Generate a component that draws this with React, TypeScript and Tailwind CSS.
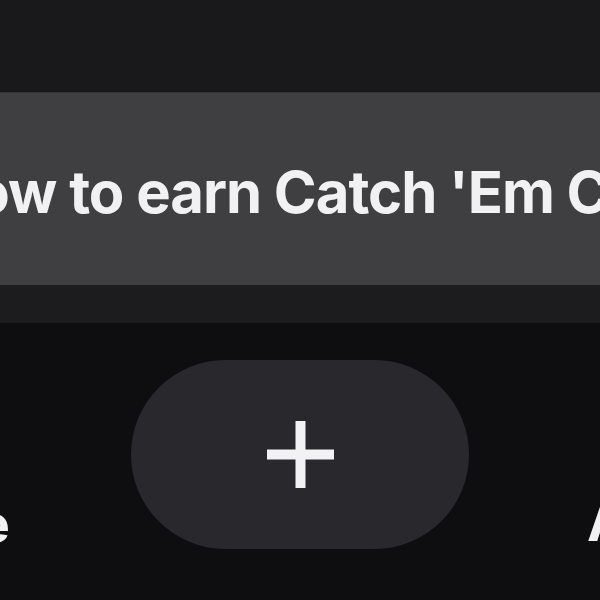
const PlusIcon = () => (
  <svg width="67" height="67" viewBox="0 0 67 67" fill="#f2f2f4">
    <rect x="28.5" y="0" width="10" height="67" />
    <rect x="0" y="28.5" width="67" height="10" />
  </svg>
);

export default function App() {
  return (
    <div className="w-[600px] h-[600px] overflow-hidden bg-[#0e0e10] flex flex-col font-['Inter',sans-serif] text-[#f1f1f3]">
      <div className="h-[92px] bg-[#19191b] shrink-0" />

      {/* info banner */}
      <div className="h-[193px] shrink-0 bg-[#3f3f41] border-t border-[#353537] flex items-start pt-[70px] overflow-hidden">
        <span className="ml-[-68px] whitespace-nowrap text-[58px] leading-none font-bold tracking-[-1px]">
          How to earn Catch 'Em Coins
        </span>
      </div>

      <div className="h-[38px] shrink-0 bg-[#1c1c1e]" />

      {/* bottom nav */}
      <div className="flex items-start pt-[37px]">
        <div className="w-[131px] shrink-0 flex justify-end pr-[121px]">
          <span className="mt-[137px] whitespace-nowrap text-[54px] leading-none font-bold">Home</span>
        </div>
        <button className="w-[338px] h-[189px] shrink-0 rounded-full bg-[#29292d] flex items-center justify-center">
          <PlusIcon />
        </button>
        <div className="pl-[118px] shrink-0">
          <span className="mt-[135px] block whitespace-nowrap text-[54px] leading-none font-bold">Activity</span>
        </div>
      </div>
    </div>
  );
}
